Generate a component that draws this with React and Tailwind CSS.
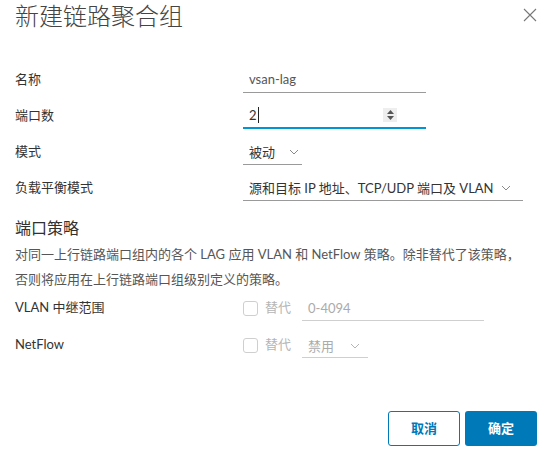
import React from "react";

const FONT = "font-['Lato','Noto_Sans','Noto_Sans_CJK_SC',sans-serif]";

function Chevron({ className = "" }) {
  return (
    <svg width="10" height="6" viewBox="0 0 10 6" className={className}>
      <path d="M1 1l4 4 4-4" fill="none" stroke="currentColor" strokeWidth="1" />
    </svg>
  );
}

function Label({ children }) {
  return <div className="text-[13px] text-[#333] pb-[4px]">{children}</div>;
}

export default function App() {
  return (
    <div className={`w-[555px] h-[452px] bg-white flex flex-col ${FONT}`}>
      <div className="flex items-start justify-between pl-[15px] pr-[18px] pt-[2px]">
        <h1 className="text-[24px] leading-[26px] font-light text-[#444] font-['Noto_Sans_CJK_SC_Light','Noto_Sans_CJK_SC_DemiLight','Noto_Sans_CJK_SC',sans-serif]">
          新建链路聚合组
        </h1>
        <svg width="14" height="14" viewBox="0 0 14 14" className="mt-[6px] text-[#777]">
          <path d="M1 1l12 12M13 1L1 13" stroke="currentColor" strokeWidth="1.1" fill="none" />
        </svg>
      </div>

      <div className="mt-[29px] flex flex-col pl-[15px]">
        <div className="grid grid-cols-[228px_1fr] items-end h-[36px]">
          <Label>名称</Label>
          <div className="w-[183px] h-[26px] border-b border-[#9a9a9a] pl-[6px] text-[13px] text-[#565656] leading-[24px]">
            vsan-lag
          </div>
        </div>
        <div className="grid grid-cols-[228px_1fr] items-end h-[36px]">
          <Label>端口数</Label>
          <div className="w-[183px] h-[26px] border-b-2 border-[#0095d3] pl-[6px] pr-[29px] text-[13px] text-[#333] leading-[24px] flex items-center justify-between">
            <span className="flex items-center">
              2<span className="inline-block w-[1px] h-[16px] bg-[#222] ml-[1px]" />
            </span>
            <span className="w-[14px] h-[14px] bg-[#eeeeee] flex flex-col items-center justify-center gap-[2px]">
              <svg width="7" height="4" viewBox="0 0 7 4"><path d="M0 4L3.5 0 7 4z" fill="#555" /></svg>
              <svg width="7" height="4" viewBox="0 0 7 4"><path d="M0 0h7L3.5 4z" fill="#555" /></svg>
            </span>
          </div>
        </div>
        <div className="grid grid-cols-[228px_1fr] items-end h-[36px]">
          <Label>模式</Label>
          <div className="w-[59px] h-[26px] border-b border-[#9a9a9a] pl-[6px] text-[13px] text-[#333] leading-[24px] flex items-center">
            被动
            <Chevron className="ml-[14px] text-[#8a8a8a]" />
          </div>
        </div>
        <div className="grid grid-cols-[228px_1fr] items-end h-[36px]">
          <Label>负载平衡模式</Label>
          <div className="w-[280px] h-[26px] border-b border-[#9a9a9a] pl-[6px] text-[13px] text-[#333] leading-[24px] flex items-center">
            源和目标 IP 地址、TCP/UDP 端口及 VLAN
            <Chevron className="ml-[7px] text-[#8a8a8a]" />
          </div>
        </div>

        <h2 className="mt-[17px] text-[16px] leading-[20px] text-[#313131]">端口策略</h2>
        <p className="mt-[4px] pr-[20px] text-[13px] leading-[25px] text-[#565656]">
          对同一上行链路端口组内的各个 LAG 应用 VLAN 和 NetFlow 策略。除非替代了该策略，
          <br />
          否则将应用在上行链路端口组级别定义的策略。
        </p>

        <div className="grid grid-cols-[228px_1fr] items-center h-[32px]">
          <div className="text-[13px] text-[#333]">VLAN 中继范围</div>
          <div className="flex items-center">
            <span className="w-[15px] h-[15px] border border-[#cfcfcf] rounded-[3px]" />
            <span className="ml-[7px] text-[13px] text-[#b5b5b5]">替代</span>
            <div className="ml-[11px] w-[182px] h-[24px] mt-[2px] border-b border-[#cfcfcf] pl-[6px] text-[13px] leading-[22px] text-[#ababab]">
              0-4094
            </div>
          </div>
        </div>
        <div className="mt-[3px] grid grid-cols-[228px_1fr] items-center h-[36px]">
          <div className="text-[13px] text-[#333]">NetFlow</div>
          <div className="flex items-center">
            <span className="w-[15px] h-[15px] border border-[#cfcfcf] rounded-[3px]" />
            <span className="ml-[7px] text-[13px] text-[#b5b5b5]">替代</span>
            <div className="ml-[11px] w-[66px] h-[24px] mt-[2px] border-b border-[#cfcfcf] pl-[6px] text-[13px] leading-[22px] text-[#ababab] flex items-center">
              禁用
              <Chevron className="ml-[16px] text-[#b5b5b5]" />
            </div>
          </div>
        </div>
      </div>

      <div className="mt-auto mb-[6px] flex justify-end gap-[5px] pr-[18px]">
        <button className="w-[72px] h-[35px] rounded-[3px] border border-[#0079b8] text-[#0079b8] text-[13px] font-semibold bg-white">
          取消
        </button>
        <button className="w-[72px] h-[35px] rounded-[3px] bg-[#0079b8] text-white text-[13px] font-semibold">
          确定
        </button>
      </div>
    </div>
  );
}
